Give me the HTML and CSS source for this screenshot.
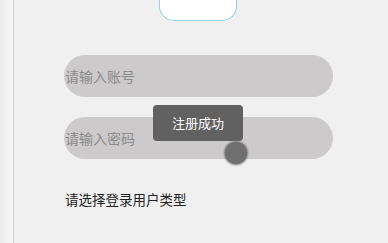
FILE: index.html
```html
<!DOCTYPE html>
<html lang="zh">
<head>
<meta charset="utf-8">
<link rel="stylesheet" href="styles.css">
</head>
<body>
<div class="page">
  <div class="side"></div>
  <main class="main">
    <div class="logo"></div>
    <div class="field">请输入账号</div>
    <div class="field second">请输入密码</div>
    <div class="label">请选择登录用户类型</div>
    <div class="toast">注册成功</div>
    <div class="touch"></div>
  </main>
</div>
</body>
</html>
```
FILE: styles.css
```css
html, body {
  margin: 0;
  padding: 0;
  height: 100%;
  overflow: hidden;
}
body {
  font-family: "Noto Sans CJK SC", "Microsoft YaHei", sans-serif;
  background: #f0f0f0;
}
.page {
  display: flex;
  height: 243px;
}
.side {
  width: 13px;
  flex: none;
  background: linear-gradient(to right, #ececec, #f7f7f7);
  border-right: 1px solid #cfcfcf;
  box-shadow: 1px 0 0 #fafafa;
}
.main {
  position: relative;
  flex: 1;
  display: flex;
  flex-direction: column;
  align-items: flex-start;
  padding-left: 50px;
  background: #f0f0f0;
}
.logo {
  align-self: flex-start;
  margin-left: 95px;
  width: 76px;
  height: 20px;
  background: #ffffff;
  border: 1px solid #8fd0ea;
  border-top: none;
  border-radius: 0 0 15px 15px;
}
.field {
  margin-top: 34px;
  width: 269px;
  height: 42px;
  border-radius: 21px;
  background: #cccacb;
  color: #8a8a8a;
  font-size: 14px;
  line-height: 42px;
  padding-left: 1px;
  box-sizing: border-box;
}
.field.second {
  margin-top: 20px;
}
.label {
  margin-top: 31px;
  margin-left: 1px;
  font-size: 13.5px;
  line-height: 18px;
  color: #222222;
}
.toast {
  position: absolute;
  left: 139px;
  top: 105px;
  width: 90px;
  height: 36px;
  border-radius: 4px;
  background: #616161;
  color: #ffffff;
  font-size: 13px;
  line-height: 36px;
  text-align: center;
}
.touch {
  position: absolute;
  left: 211px;
  top: 142px;
  width: 22px;
  height: 22px;
  border-radius: 50%;
  background: #6f6f6f;
  box-shadow: 0 0 2px 1px #7a7a7a;
}
```
